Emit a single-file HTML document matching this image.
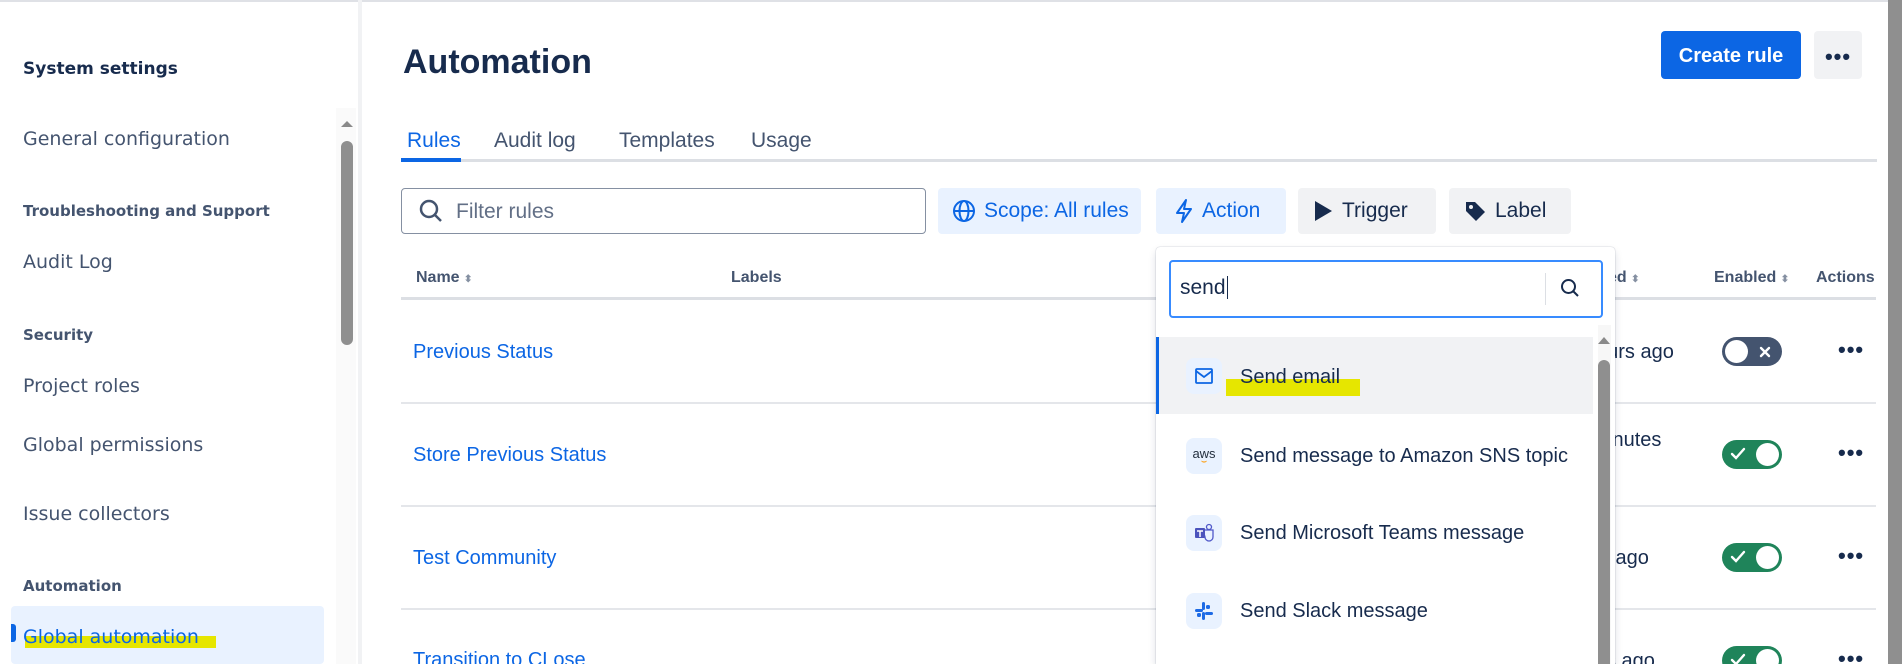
<!DOCTYPE html>
<html style="width:1902px;height:664px;overflow:hidden"><head><meta charset="utf-8"><style>
*{box-sizing:border-box;margin:0;padding:0}
body{width:1902px;height:664px;overflow:hidden;background:#fff;font-family:"Liberation Sans",sans-serif;position:relative;color:#172b4d}
.a{position:absolute;white-space:nowrap}
.sb{font-family:"DejaVu Sans",sans-serif;color:#44546f}
.sbh{font-family:"DejaVu Sans",sans-serif;font-weight:bold;color:#44546f;font-size:15px}
.lnk{color:#0c66e4;font-size:20px}
.hd{color:#44546f;font-weight:bold;font-size:16px}
.row{position:absolute;left:401px;width:1475px;height:2px;background:#e4e6ea}
.btn{position:absolute;top:188px;height:46px;border-radius:4px;display:flex;align-items:center;font-size:21px;gap:8px;padding-left:14px}
.tg{position:absolute;left:1722px;width:60px;height:29px;border-radius:15px;background:#1f845a}
.tg::after{content:"";position:absolute;right:3px;top:3px;width:23px;height:23px;border-radius:50%;background:#fff}
.dots{position:absolute;left:1838px;font-size:22px;font-weight:bold;letter-spacing:1px;color:#172b4d}
.it{position:absolute;left:1240px;font-size:20px;color:#172b4d}
.ib{position:absolute;left:1186px;width:36px;height:36px;border-radius:8px;background:#e9f2ff;display:flex;align-items:center;justify-content:center}
</style></head><body>
<div class="a" style="left:0;top:0;width:1902px;height:2px;background:#dfe1e6"></div>
<!-- sidebar -->
<div class="a" style="left:358px;top:0;width:4px;height:664px;background:#f1f2f4"></div>
<div class="a" style="left:336px;top:108px;width:20px;height:556px;background:#fafafa"></div>
<div class="a" style="left:341px;top:118px;width:13px;height:240px;"><div style="width:0;height:0;border-left:6px solid transparent;border-right:6px solid transparent;border-bottom:6px solid #8a8a8a;margin:3px 0 0 0"></div><div style="margin-top:14px;width:12px;height:204px;border-radius:6px;background:#8f8f8f"></div></div>
<div class="a" style="left:23px;top:59px;font-family:'DejaVu Sans',sans-serif;font-weight:bold;font-size:17px;color:#172b4d">System settings</div>
<div class="a sb" style="left:23px;top:128px;font-size:19px">General configuration</div>
<div class="a sbh" style="left:23px;top:202px">Troubleshooting and Support</div>
<div class="a sb" style="left:23px;top:251px;font-size:19px">Audit Log</div>
<div class="a sbh" style="left:23px;top:326px">Security</div>
<div class="a sb" style="left:23px;top:375px;font-size:19px">Project roles</div>
<div class="a sb" style="left:23px;top:434px;font-size:19px">Global permissions</div>
<div class="a sb" style="left:23px;top:503px;font-size:19px">Issue collectors</div>
<div class="a sbh" style="left:23px;top:577px">Automation</div>
<div class="a" style="left:11px;top:606px;width:313px;height:58px;background:#e9f2ff;border-radius:4px"></div>
<div class="a" style="left:11px;top:624px;width:5px;height:18px;background:#0c66e4;border-radius:0 3px 3px 0"></div>
<div class="a" style="left:25px;top:636px;width:191px;height:12px;background:#e6e600"></div>
<div class="a sb" style="left:23px;top:626px;font-size:19px;color:#0c66e4">Global automation</div>
<!-- main -->
<div class="a" style="left:403px;top:43px;font-size:34px;font-weight:bold;color:#172b4d">Automation</div>
<div class="a" style="left:1661px;top:31px;width:140px;height:48px;background:#0c66e4;border-radius:4px;color:#fff;font-weight:bold;font-size:20px;display:flex;align-items:center;justify-content:center;padding-top:3px">Create rule</div>
<div class="a" style="left:1814px;top:31px;width:48px;height:48px;background:#f1f2f4;border-radius:4px;font-weight:bold;font-size:22px;display:flex;align-items:center;justify-content:center;color:#172b4d;letter-spacing:1px;padding-top:3px">•••</div>
<div class="a" style="left:1888px;top:0;width:14px;height:664px;background:#8f8f8f"></div>
<div class="a" style="left:407px;top:129px;font-size:21px;color:#0c66e4">Rules</div>
<div class="a" style="left:494px;top:129px;font-size:21px;color:#44546f">Audit log</div>
<div class="a" style="left:619px;top:129px;font-size:21px;color:#44546f">Templates</div>
<div class="a" style="left:751px;top:129px;font-size:21px;color:#44546f">Usage</div>
<div class="a" style="left:401px;top:159px;width:1476px;height:3px;background:#dcdfe4"></div>
<div class="a" style="left:401px;top:158px;width:60px;height:4px;background:#0c66e4"></div>
<div class="a" style="left:401px;top:188px;width:525px;height:46px;border:1.5px solid #8590a2;border-radius:4px"></div>
<svg class="a" style="left:418px;top:198px" width="26" height="26" viewBox="0 0 26 26"><circle cx="11" cy="11" r="8" fill="none" stroke="#44546f" stroke-width="2.5"/><path d="M17 17l6 6" stroke="#44546f" stroke-width="2.5"/></svg>
<div class="a" style="left:456px;top:200px;font-size:21px;color:#626f86">Filter rules</div>
<div class="btn" style="left:938px;width:203px;background:#e9f2ff;color:#0c66e4"><svg width="24" height="24" viewBox="0 0 24 24" fill="none" stroke="#0c66e4" stroke-width="2"><circle cx="12" cy="12" r="10"/><ellipse cx="12" cy="12" rx="4.5" ry="10"/><path d="M2 12h20"/></svg>Scope: All rules</div>
<div class="btn" style="left:1156px;width:130px;background:#e9f2ff;color:#0c66e4;padding-left:18px"><svg width="20" height="26" viewBox="0 0 20 26" fill="none" stroke="#0c66e4" stroke-width="2" stroke-linejoin="round"><path d="M12 2L3 15h7l-2 9 9-13h-7z"/></svg>Action</div>
<div class="btn" style="left:1298px;width:138px;background:#f1f2f4;color:#172b4d"><svg width="22" height="24" viewBox="0 0 22 24"><path d="M3 2l17 10-17 10z" fill="#172b4d"/></svg>Trigger</div>
<div class="btn" style="left:1449px;width:122px;background:#f1f2f4;color:#172b4d"><svg width="24" height="24" viewBox="0 0 24 24"><path d="M3 3h9l10 10-9 9L3 12z" fill="#172b4d"/><circle cx="8" cy="8" r="2" fill="#f1f2f4"/></svg>Label</div>
<div class="a hd" style="left:416px;top:269px">Name <span style="font-size:10px;color:#8590a2">⬍</span></div>
<div class="a hd" style="left:731px;top:269px">Labels</div>
<div class="a hd" style="left:1714px;top:269px">Enabled <span style="font-size:10px;color:#8590a2">⬍</span></div>
<div class="a hd" style="left:1816px;top:269px">Actions</div>
<div class="a hd" style="left:1608px;top:269px">ed <span style="font-size:10px;color:#8590a2">⬍</span></div>
<div class="a" style="left:401px;top:297px;width:1475px;height:3px;background:#dcdfe4"></div>
<div class="row" style="top:402px"></div><div class="row" style="top:505px"></div><div class="row" style="top:608px"></div>
<div class="a lnk" style="left:413px;top:341px">Previous Status</div>
<div class="a lnk" style="left:413px;top:444px">Store Previous Status</div>
<div class="a lnk" style="left:413px;top:547px">Test Community</div>
<div class="a lnk" style="left:413px;top:649px">Transition to CLose</div>
<div class="a" style="left:1596px;top:341px;font-size:20px">ours ago</div>
<div class="a" style="left:1608px;top:429px;font-size:20px">inutes</div>
<div class="a" style="left:1600px;top:547px;font-size:20px">s ago</div>
<div class="a" style="left:1596px;top:650px;font-size:20px">ys ago</div>
<div class="a" style="left:1722px;top:337px;width:60px;height:29px;border-radius:15px;background:#44546f"></div>
<div class="a" style="left:1725px;top:340px;width:23px;height:23px;border-radius:50%;background:#fff"></div>
<svg class="a" style="left:1758px;top:345px" width="14" height="14" viewBox="0 0 14 14"><path d="M3 3l8 8M11 3l-8 8" stroke="#fff" stroke-width="2.4" stroke-linecap="round"/></svg>
<div class="tg" style="top:440px"></div><svg class="a" style="left:1730px;top:447px" width="16" height="14" viewBox="0 0 16 14"><path d="M2 7l4 4 8-9" fill="none" stroke="#fff" stroke-width="2.4" stroke-linecap="round"/></svg>
<div class="tg" style="top:543px"></div><svg class="a" style="left:1730px;top:550px" width="16" height="14" viewBox="0 0 16 14"><path d="M2 7l4 4 8-9" fill="none" stroke="#fff" stroke-width="2.4" stroke-linecap="round"/></svg>
<div class="tg" style="top:646px"></div><svg class="a" style="left:1730px;top:653px" width="16" height="14" viewBox="0 0 16 14"><path d="M2 7l4 4 8-9" fill="none" stroke="#fff" stroke-width="2.4" stroke-linecap="round"/></svg>
<div class="dots" style="top:337px">•••</div>
<div class="dots" style="top:440px">•••</div>
<div class="dots" style="top:543px">•••</div>
<div class="dots" style="top:646px">•••</div>
<!-- dropdown -->
<div class="a" style="left:1156px;top:247px;width:459px;height:417px;background:#fff;border-radius:4px 4px 0 0;box-shadow:0 0 1px rgba(9,30,66,.4),0 4px 8px rgba(9,30,66,.15)"></div>
<div class="a" style="left:1169px;top:260px;width:434px;height:58px;border:2px solid #388bff;border-radius:4px"></div>
<div class="a" style="left:1180px;top:276px;font-size:21px;color:#172b4d">send<span style="border-left:1.5px solid #172b4d;margin-left:1px"></span></div>
<div class="a" style="left:1545px;top:273px;width:1px;height:32px;background:#dcdfe4"></div>
<svg class="a" style="left:1559px;top:277px" width="22" height="22" viewBox="0 0 22 22"><circle cx="9.5" cy="9.5" r="6.5" fill="none" stroke="#172b4d" stroke-width="2"/><path d="M14 14l5 5" stroke="#172b4d" stroke-width="2"/></svg>
<div class="a" style="left:1156px;top:337px;width:437px;height:77px;background:#f1f2f4"></div>
<div class="a" style="left:1156px;top:337px;width:3px;height:77px;background:#0c66e4"></div>
<div class="a" style="left:1598px;top:325px;width:13px;height:339px;background:#f7f7f7"></div>
<div class="a" style="left:1598px;top:337px;width:0;height:0;border-left:6px solid transparent;border-right:6px solid transparent;border-bottom:7px solid #8a8a8a"></div>
<div class="a" style="left:1598px;top:360px;width:12px;height:304px;border-radius:6px 6px 0 0;background:#8f8f8f"></div>
<div class="ib" style="top:358px"><svg width="18" height="16" viewBox="0 0 18 16" fill="none" stroke="#0c66e4" stroke-width="1.8"><rect x="1" y="1" width="16" height="14" rx="1"/><path d="M1 3l8 6 8-6"/></svg></div>
<div class="a" style="left:1226px;top:379px;width:134px;height:17px;background:#e6e600"></div>
<div class="it" style="top:366px">Send email</div>
<div class="ib" style="top:438px;flex-direction:column;font-size:13px;color:#232f3e;line-height:11px">aws<span style="color:#ff9900;font-size:10px;line-height:6px">⌣</span></div>
<div class="it" style="top:445px">Send message to Amazon SNS topic</div>
<div class="ib" style="top:515px"><svg width="22" height="22" viewBox="0 0 22 22"><circle cx="16" cy="5" r="2.5" fill="none" stroke="#5059c9" stroke-width="1.3"/><path d="M10 8h10v7a4 4 0 0 1-8 0z" fill="none" stroke="#5059c9" stroke-width="1.3"/><rect x="2" y="6" width="10" height="10" rx="1" fill="#4b53bc"/><path d="M4 9h6M7 9v6" stroke="#fff" stroke-width="1.5"/></svg></div>
<div class="it" style="top:522px">Send Microsoft Teams message</div>
<div class="ib" style="top:593px"><svg width="20" height="20" viewBox="0 0 20 20" fill="#1d6ae5"><rect x="8" y="1" width="3" height="8" rx="1.5"/><rect x="1" y="8" width="8" height="3" rx="1.5"/><rect x="11" y="11" width="8" height="3" rx="1.5"/><rect x="8" y="11" width="3" height="8" rx="1.5"/><rect x="12" y="4" width="4" height="4" rx="1.5"/><rect x="3" y="12" width="4" height="4" rx="1.5"/></svg></div>
<div class="it" style="top:600px">Send Slack message</div>
</body></html>
